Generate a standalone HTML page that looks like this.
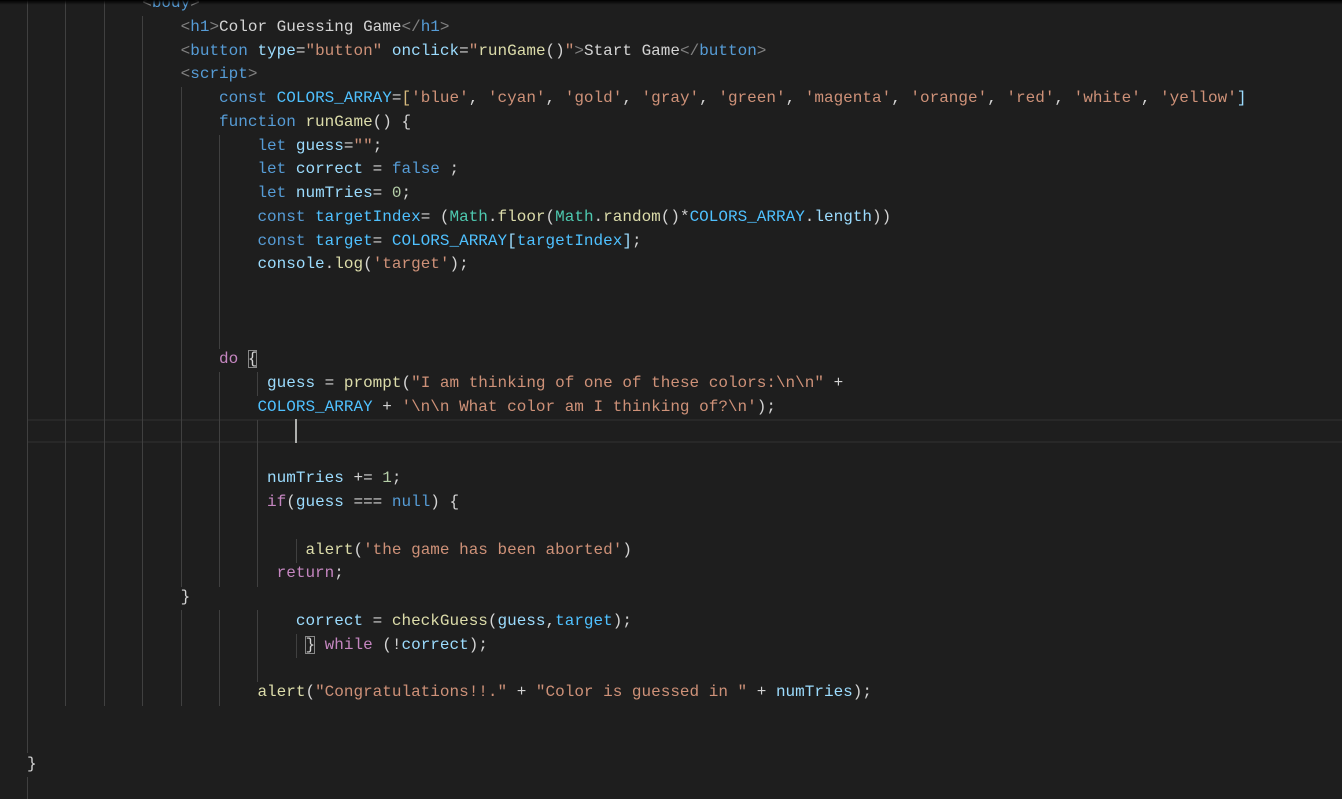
<!DOCTYPE html>
<html><head><meta charset="utf-8"><style>
html,body{margin:0;padding:0;background:#1e1e1e;width:1342px;height:799px;overflow:hidden;position:relative}
#L{position:absolute;left:27px;top:-8px;font-family:"Liberation Mono",monospace;font-size:16px;color:#d4d4d4;z-index:2}
#L div{height:23.78px;line-height:23.78px;white-space:pre}
.g{position:absolute;width:1px;background:#404040;z-index:1}
.t{color:#808080}.n{color:#569cd6}.a{color:#9cdcfe}.s{color:#ce9178}.k{color:#569cd6}.c{color:#c586c0}.f{color:#dcdcaa}.v{color:#9cdcfe}.C{color:#4fc1ff}.m{color:#b5cea8}.e{color:#4ec9b0}.y{color:#d4d4d4}.q{color:#d7ba7d}.b{outline:1px solid #888;outline-offset:-1px}
#hl{position:absolute;left:27px;right:0;top:419px;height:20px;border-top:2px solid #282828;border-bottom:2px solid #282828}
#cur{position:absolute;left:295px;top:419px;width:2px;height:24px;background:#aeafad;z-index:3}
#sh{position:absolute;left:0;right:0;top:0;height:5px;background:linear-gradient(#000,rgba(0,0,0,0));z-index:4}
.x0{left:27px}.x1{left:65px}.x2{left:104px}.x3{left:142px}.x4{left:181px}.x5{left:219px}.x6{left:257px}.x7{left:296px}
.r1{top:-8px;height:761px}.r2{top:777px;height:30px}.r3{top:-8px;height:714px}.r4{top:16px;height:690px}
.r5{top:87px;height:500px}.r6{top:610px;height:96px}.r7{top:135px;height:214px}.r8{top:372px;height:215px}
.r9{top:372px;height:24px}.r10{top:420px;height:167px}.r11{top:610px;height:72px}.r12{top:539px;height:24px}.r13{top:634px;height:24px}
</style></head><body>
<div id="hl"></div>
<div class="g x0 r1"></div><div class="g x0 r2"></div>
<div class="g x1 r3"></div><div class="g x2 r3"></div><div class="g x3 r4"></div>
<div class="g x4 r5"></div><div class="g x4 r6"></div>
<div class="g x5 r7"></div><div class="g x5 r8"></div><div class="g x5 r6"></div>
<div class="g x6 r9"></div><div class="g x6 r10"></div><div class="g x6 r11"></div>
<div class="g x7 r12"></div><div class="g x7 r13"></div>
<div id="L">
<div>            <span class="t">&lt;</span><span class="n">body</span><span class="t">&gt;</span></div>
<div>                <span class="t">&lt;</span><span class="n">h1</span><span class="t">&gt;</span>Color Guessing Game<span class="t">&lt;/</span><span class="n">h1</span><span class="t">&gt;</span></div>
<div>                <span class="t">&lt;</span><span class="n">button</span> <span class="a">type</span>=<span class="s">"button"</span> <span class="a">onclick</span>=<span class="s">"</span><span class="f">runGame</span><span class="y">()</span><span class="s">"</span><span class="t">&gt;</span>Start Game<span class="t">&lt;/</span><span class="n">button</span><span class="t">&gt;</span></div>
<div>                <span class="t">&lt;</span><span class="n">script</span><span class="t">&gt;</span></div>
<div>                    <span class="k">const</span> <span class="C">COLORS_ARRAY</span>=<span class="q">[</span><span class="s">'blue'</span>, <span class="s">'cyan'</span>, <span class="s">'gold'</span>, <span class="s">'gray'</span>, <span class="s">'green'</span>, <span class="s">'magenta'</span>, <span class="s">'orange'</span>, <span class="s">'red'</span>, <span class="s">'white'</span>, <span class="s">'yellow'</span><span class="a">]</span></div>
<div>                    <span class="k">function</span> <span class="f">runGame</span><span class="y">()</span> <span class="y">{</span></div>
<div>                        <span class="k">let</span> <span class="v">guess</span>=<span class="s">""</span>;</div>
<div>                        <span class="k">let</span> <span class="v">correct</span> = <span class="k">false</span> ;</div>
<div>                        <span class="k">let</span> <span class="v">numTries</span>= <span class="m">0</span>;</div>
<div>                        <span class="k">const</span> <span class="C">targetIndex</span>= <span class="y">(</span><span class="e">Math</span>.<span class="f">floor</span>(<span class="e">Math</span>.<span class="f">random</span>()*<span class="C">COLORS_ARRAY</span>.<span class="v">length</span>)<span class="y">)</span></div>
<div>                        <span class="k">const</span> <span class="C">target</span>= <span class="C">COLORS_ARRAY</span><span class="a">[</span><span class="C">targetIndex</span><span class="a">]</span>;</div>
<div>                        <span class="v">console</span>.<span class="f">log</span>(<span class="s">'target'</span>);</div>
<div> </div>
<div> </div>
<div> </div>
<div>                    <span class="c">do</span> <span class="y b">{</span></div>
<div>                         <span class="v">guess</span> = <span class="f">prompt</span>(<span class="s">"I am thinking of one of these colors:\n\n"</span> +</div>
<div>                        <span class="C">COLORS_ARRAY</span> + <span class="s">'\n\n What color am I thinking of?\n'</span>);</div>
<div> </div>
<div> </div>
<div>                         <span class="v">numTries</span> += <span class="m">1</span>;</div>
<div>                         <span class="c">if</span>(<span class="v">guess</span> === <span class="k">null</span>) {</div>
<div> </div>
<div>                             <span class="f">alert</span>(<span class="s">'the game has been aborted'</span>)</div>
<div>                          <span class="c">return</span>;</div>
<div>                <span class="y">}</span></div>
<div>                            <span class="v">correct</span> = <span class="f">checkGuess</span>(<span class="v">guess</span>,<span class="C">target</span>);</div>
<div>                             <span class="y b">}</span> <span class="c">while</span> (!<span class="v">correct</span>);</div>
<div> </div>
<div>                        <span class="f">alert</span>(<span class="s">"Congratulations!!."</span> + <span class="s">"Color is guessed in "</span> + <span class="v">numTries</span>);</div>
<div> </div>
<div> </div>
<div><span class="y">}</span></div>
</div>
<div id="cur"></div>
<div id="sh"></div>
</body></html>
